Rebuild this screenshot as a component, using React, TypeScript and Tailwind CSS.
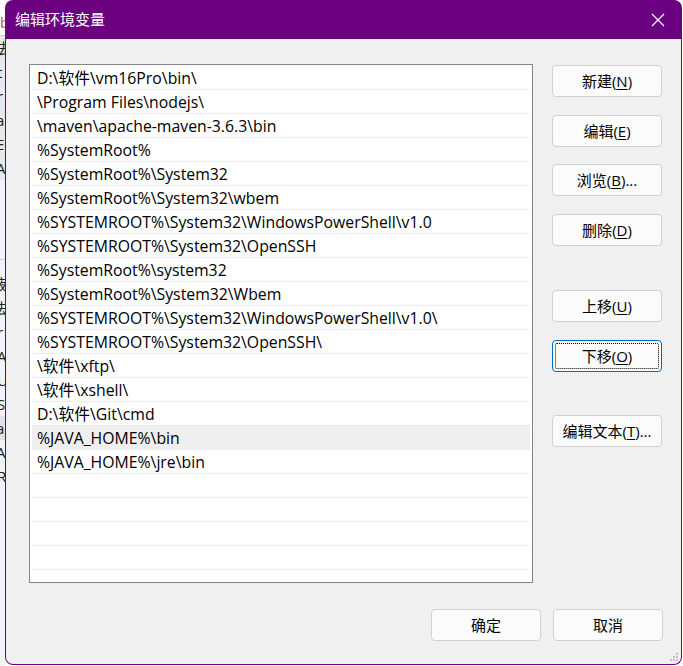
import React from "react";

const paths = [
  "D:\\软件\\vm16Pro\\bin\\",
  "\\Program Files\\nodejs\\",
  "\\maven\\apache-maven-3.6.3\\bin",
  "%SystemRoot%",
  "%SystemRoot%\\System32",
  "%SystemRoot%\\System32\\wbem",
  "%SYSTEMROOT%\\System32\\WindowsPowerShell\\v1.0",
  "%SYSTEMROOT%\\System32\\OpenSSH",
  "%SystemRoot%\\system32",
  "%SystemRoot%\\System32\\Wbem",
  "%SYSTEMROOT%\\System32\\WindowsPowerShell\\v1.0\\",
  "%SYSTEMROOT%\\System32\\OpenSSH\\",
  "\\软件\\xftp\\",
  "\\软件\\xshell\\",
  "D:\\软件\\Git\\cmd",
  "%JAVA_HOME%\\bin",
  "%JAVA_HOME%\\jre\\bin",
];

const font = {
  fontFamily: '"Open Sans", "Noto Sans CJK SC", sans-serif',
};

function Btn({
  label,
  k,
  tail = "",
  focused,
  className = "",
}: {
  label: string;
  k?: string;
  tail?: string;
  focused?: boolean;
  className?: string;
}) {
  return (
    <button
      className={`relative flex h-[32px] w-[110px] items-center justify-center rounded-[4px] border bg-[#fbfbfb] text-[15px] text-black ${
        focused ? "border-[#0067c0]" : "border-[#d1d1d1]"
      } ${className}`}
    >
      {focused && (
        <span className="absolute inset-[2px] rounded-[2px] border border-dotted border-black" />
      )}
      {label}
      {k && (
        <>
          (<u className="underline-offset-2">{k}</u>){tail}
        </>
      )}
    </button>
  );
}

export default function App() {
  const rows = [...paths, ...Array(5).fill("")];
  return (
    <div
      className="relative flex h-[666px] w-[683px] overflow-hidden bg-white"
      style={font}
    >
      {/* edge of the window behind the dialog */}
      <div className="flex w-[5px] shrink-0 flex-col overflow-hidden bg-[#f3f3f3] text-[15px] leading-[24px] text-[#222]">
        <div className="h-[35px] bg-white pt-[10px] text-[#c0601a]">b</div>
        <div className="flex flex-col border-t border-[#cfcfcf] bg-[#e8e8e8]">
          <span className="-ml-[6px]">法</span>
          <span className="-ml-[3px]">t</span>
          <span className="-ml-[3px]">r</span>
          <span className="-ml-[4px]">a</span>
          <span className="-ml-[4px]">E</span>
          <span className="-ml-[4px]">A</span>
        </div>
        <div className="h-[80px] border-b border-[#cfcfcf]" />
        <div className="flex flex-col pt-[12px]">
          <span className="-ml-[8px]">液</span>
          <span className="-ml-[8px]">法</span>
          <span className="-ml-[3px]">r</span>
          <span className="-ml-[3px]">A</span>
          <span className="-ml-[3px]">U</span>
          <span className="-ml-[3px]">S</span>
          <span className="-ml-[4px] bg-[#e2e2e2]">a</span>
          <span className="-ml-[4px]">A</span>
          <span className="-ml-[3px]">R</span>
        </div>
      </div>

      <div className="flex h-[665px] w-[677px] shrink-0 flex-col">
        <div className="flex h-[39px] items-center justify-between rounded-t-[8px] bg-[#6b0080] pl-[10px] pr-[14px] text-[15px] text-white">
          <span>编辑环境变量</span>
          <svg width="14" height="14" viewBox="0 0 14 14" className="mr-[3px]">
            <path d="M1 1L13 13M13 1L1 13" stroke="white" strokeWidth="1.2" />
          </svg>
        </div>
        <div className="relative flex flex-1 flex-col rounded-b-[8px] border-x border-b border-[#6b0080] bg-[#f0f0f0]">
          <div className="flex pl-[23px] pt-[25px]">
            <div className="h-[519px] w-[504px] overflow-hidden border border-[#85848a] bg-white pt-[1px]">
              {rows.map((p, i) => (
                <div
                  key={i}
                  className={`mx-[2px] h-[24px] whitespace-nowrap border-b border-[#ededed] pl-[5px] text-[15.8px] leading-[25px] text-black ${
                    i === 15 ? "bg-[#efefef]" : ""
                  }`}
                >
                  {p}
                </div>
              ))}
            </div>
            <div className="ml-[19px] flex flex-col pt-[1px]">
              <Btn label="新建" k="N" />
              <Btn label="编辑" k="E" className="mt-[18px]" />
              <Btn label="浏览" k="B" tail="..." className="mt-[17px]" />
              <Btn label="删除" k="D" className="mt-[18px]" />
              <Btn label="上移" k="U" className="mt-[44px]" />
              <Btn label="下移" k="O" focused className="mt-[18px]" />
              <Btn label="编辑文本" k="T" tail="..." className="mt-[43px]" />
            </div>
          </div>
          <div className="flex justify-end gap-[12px] pr-[18px] pt-[26px]">
            <Btn label="确定" />
            <Btn label="取消" />
          </div>
          <svg
            width="12"
            height="12"
            viewBox="0 0 12 12"
            className="absolute bottom-[2px] right-[2px]"
          >
            {[
              [9, 3],
              [9, 6],
              [6, 6],
              [9, 9],
              [6, 9],
              [3, 9],
            ].map(([x, y], i) => (
              <rect key={i} x={x} y={y} width="2" height="2" fill="#c4c4c4" />
            ))}
          </svg>
        </div>
      </div>
    </div>
  );
}
